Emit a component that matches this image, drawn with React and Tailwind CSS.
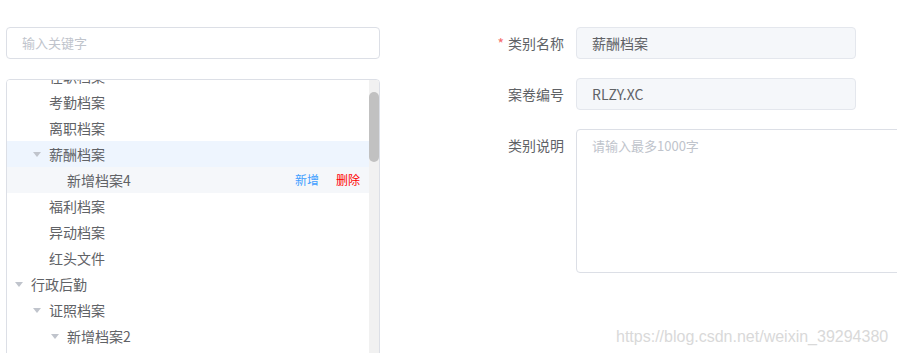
const rows = [
  { level: 2, label: "在职档案" },
  { level: 2, label: "考勤档案" },
  { level: 2, label: "离职档案" },
  { level: 2, label: "薪酬档案", open: true, current: true },
  { level: 3, label: "新增档案4", hover: true },
  { level: 2, label: "福利档案" },
  { level: 2, label: "异动档案" },
  { level: 2, label: "红头文件" },
  { level: 1, label: "行政后勤", open: true },
  { level: 2, label: "证照档案", open: true },
  { level: 3, label: "新增档案2", open: true },
];

const indent = { 1: "pl-0", 2: "pl-[18px]", 3: "pl-[36px]" };

function Caret() {
  return (
    <svg width="8" height="5" viewBox="0 0 8 5">
      <path d="M0 0h8L4 5z" fill="#c0c4cc" />
    </svg>
  );
}

function TreeRow({ row }) {
  const bg = row.current
    ? "bg-[#eef5fe]"
    : row.hover
    ? "bg-[#f5f7fa]"
    : "bg-white";
  return (
    <div className={`flex items-center h-[26px] ${bg} ${indent[row.level]}`}>
      <span className="w-[24px] h-[26px] flex items-center justify-center">
        {row.open && <Caret />}
      </span>
      <span className="flex-1 text-[14px] text-[#606266]">{row.label}</span>
      {row.hover && (
        <div className="flex items-center gap-[17px] pr-[9px] text-[12px]">
          <span className="text-[#409eff]">新增</span>
          <span className="text-[#ff0000]">删除</span>
        </div>
      )}
    </div>
  );
}

function FormItem({ label, required, children }) {
  return (
    <div className="flex items-start shrink-0">
      <div className="w-[100px] h-[32px] pr-[12px] flex items-center justify-end text-[14px] text-[#606266]">
        {required && <span className="text-[#f56c6c] mr-[4px]">*</span>}
        {label}
      </div>
      {children}
    </div>
  );
}

export default function App() {
  return (
    <div
      className="w-[897px] h-[353px] overflow-hidden bg-white relative flex items-start"
      style={{ fontFamily: '"Noto Sans CJK SC", "Noto Sans", sans-serif' }}
    >
      {/* Left: search + tree */}
      <div className="ml-[6px] w-[374px] pt-[27px] flex flex-col shrink-0">
        <div className="h-[32px] shrink-0 border border-[#dcdfe6] rounded-[4px] flex items-center pl-[15px] text-[13px] text-[#c0c4cc]">
          输入关键字
        </div>
        <div className="mt-[20px] h-[300px] shrink-0 border border-[#dcdfe6] rounded-[4px] flex overflow-hidden">
          <div className="flex-1 overflow-hidden">
            <div className="-mt-[17px]">
              {rows.map((r, i) => (
                <TreeRow key={i} row={r} />
              ))}
            </div>
          </div>
          <div className="w-[10px] bg-[#f1f1f1] pt-[12px] shrink-0">
            <div className="h-[70px] rounded-full bg-[#c1c1c1]" />
          </div>
        </div>
      </div>

      {/* Right: form */}
      <div className="ml-[96px] pt-[27px] flex flex-col gap-[19px] shrink-0">
        <FormItem label="类别名称" required>
          <div className="w-[280px] h-[32px] border border-[#e4e7ed] bg-[#f5f7fa] rounded-[4px] flex items-center pl-[15px] text-[14px] text-[#606266]">
            薪酬档案
          </div>
        </FormItem>
        <FormItem label="案卷编号">
          <div className="w-[280px] h-[32px] border border-[#e4e7ed] bg-[#f5f7fa] rounded-[4px] flex items-center pl-[15px] text-[14px] text-[#606266]">
            RLZY.XC
          </div>
        </FormItem>
        <FormItem label="类别说明">
          <div className="w-[400px] h-[144px] border border-[#dcdfe6] rounded-[4px] px-[15px] py-[5px] text-[13px] leading-[21px] text-[#c0c4cc]">
            请输入最多1000字
          </div>
        </FormItem>
      </div>

      <div
        className="absolute left-[616px] top-[325px] text-[16px] text-[#d9d9d9] whitespace-nowrap"
        style={{ fontFamily: '"Liberation Sans", Arial, sans-serif' }}
      >
        https://blog.csdn.net/weixin_39294380
      </div>
    </div>
  );
}
